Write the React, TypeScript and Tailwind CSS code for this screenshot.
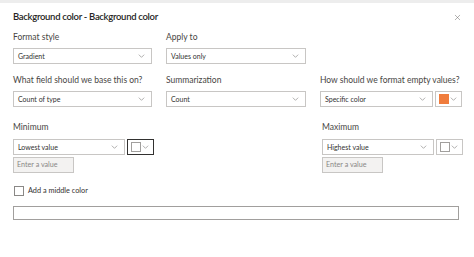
import { X } from 'lucide-react'

function Chevron() {
  return (
    <svg viewBox="0 0 10 6" className="h-[4px] w-[7px] text-[#8a8886]" fill="none" aria-hidden>
      <path d="M1 1l4 4 4-4" stroke="currentColor" strokeWidth="1" />
    </svg>
  )
}

function Select({ value, width }: { value: string; width: string }) {
  return (
    <div
      className={`flex h-[16px] ${width} items-center justify-between border border-[#c8c6c4] bg-white pl-[4px] pr-[6px]`}
    >
      <span className="text-[7px] leading-none text-[#323130]">{value}</span>
      <Chevron />
    </div>
  )
}

function ColorButton({ swatch, active }: { swatch?: string; active?: boolean }) {
  return (
    <div
      className={`flex h-[16px] w-[27px] items-center justify-between pl-[3px] pr-[4px] ${
        active ? 'border border-[#323130]' : 'border border-[#c8c6c4]'
      }`}
    >
      <div
        className={`h-[10px] w-[10px] ${swatch ? '' : 'border border-[#a19f9d] bg-white'}`}
        style={swatch ? { backgroundColor: swatch } : undefined}
      />
      <Chevron />
    </div>
  )
}

function Label({ children }: { children: string }) {
  return <p className="whitespace-nowrap text-[8.5px] leading-[12px] text-[#484644]">{children}</p>
}

function ValueInput() {
  return (
    <div className="flex h-[16px] w-[61px] items-center border border-[#c8c6c4] bg-[#f3f2f1] pl-[3px]">
      <span className="text-[7.2px] leading-none text-[#8a8886]">Enter a value</span>
    </div>
  )
}

export default function App() {
  return (
    <div
      className="relative h-[257px] w-[474px] overflow-hidden bg-white"
      style={{ fontFamily: 'Lato, "Noto Sans", sans-serif' }}
    >
      <div className="h-[3px] bg-[#ededed]" />

      <div className="flex items-center justify-between pl-[13px] pr-[12px] pt-[6px]">
        <h1 className="text-[9.5px] font-semibold leading-[16px] tracking-[-0.3px] text-[#252423]">
          Background color - Background color
        </h1>
        <X className="h-[9px] w-[9px] text-[#605e5c]" strokeWidth={1.25} />
      </div>

      <div className="flex flex-col pl-[13px] pr-[11px]">
        <div className="mt-[6px] flex gap-[14px]">
          <div className="flex w-[139px] flex-col gap-[5px]">
            <Label>Format style</Label>
            <Select value="Gradient" width="w-[139px]" />
          </div>
          <div className="flex w-[140px] flex-col gap-[5px]">
            <Label>Apply to</Label>
            <Select value="Values only" width="w-[140px]" />
          </div>
        </div>

        <div className="mt-[10px] flex gap-[14px]">
          <div className="flex w-[139px] flex-col gap-[5px]">
            <Label>What field should we base this on?</Label>
            <Select value="Count of type" width="w-[139px]" />
          </div>
          <div className="flex w-[140px] flex-col gap-[5px]">
            <Label>Summarization</Label>
            <Select value="Count" width="w-[140px]" />
          </div>
          <div className="flex flex-col gap-[5px]">
            <Label>How should we format empty values?</Label>
            <div className="flex gap-[2px]">
              <Select value="Specific color" width="w-[113px]" />
              <ColorButton swatch="#f07c3c" />
            </div>
          </div>
        </div>

        <div className="mt-[14px] flex justify-between">
          <div className="flex flex-col">
            <Label>Minimum</Label>
            <div className="mt-[6px] flex gap-[2px]">
              <Select value="Lowest value" width="w-[112px]" />
              <ColorButton active />
            </div>
            <div className="mt-[2px]">
              <ValueInput />
            </div>
          </div>
          <div className="flex flex-col">
            <Label>Maximum</Label>
            <div className="mt-[6px] flex gap-[2px]">
              <Select value="Highest value" width="w-[112px]" />
              <ColorButton />
            </div>
            <div className="mt-[2px]">
              <ValueInput />
            </div>
          </div>
        </div>

        <div className="mt-[13px] flex items-center gap-[4px] pl-[1px]">
          <div className="h-[10px] w-[10px] border border-[#8a8886] bg-white" />
          <span className="text-[7.3px] leading-none text-[#323130]">Add a middle color</span>
        </div>

        <div className="mt-[10px] h-[14px] w-[446px] border border-[#a19f9d]" />
      </div>
    </div>
  )
}
